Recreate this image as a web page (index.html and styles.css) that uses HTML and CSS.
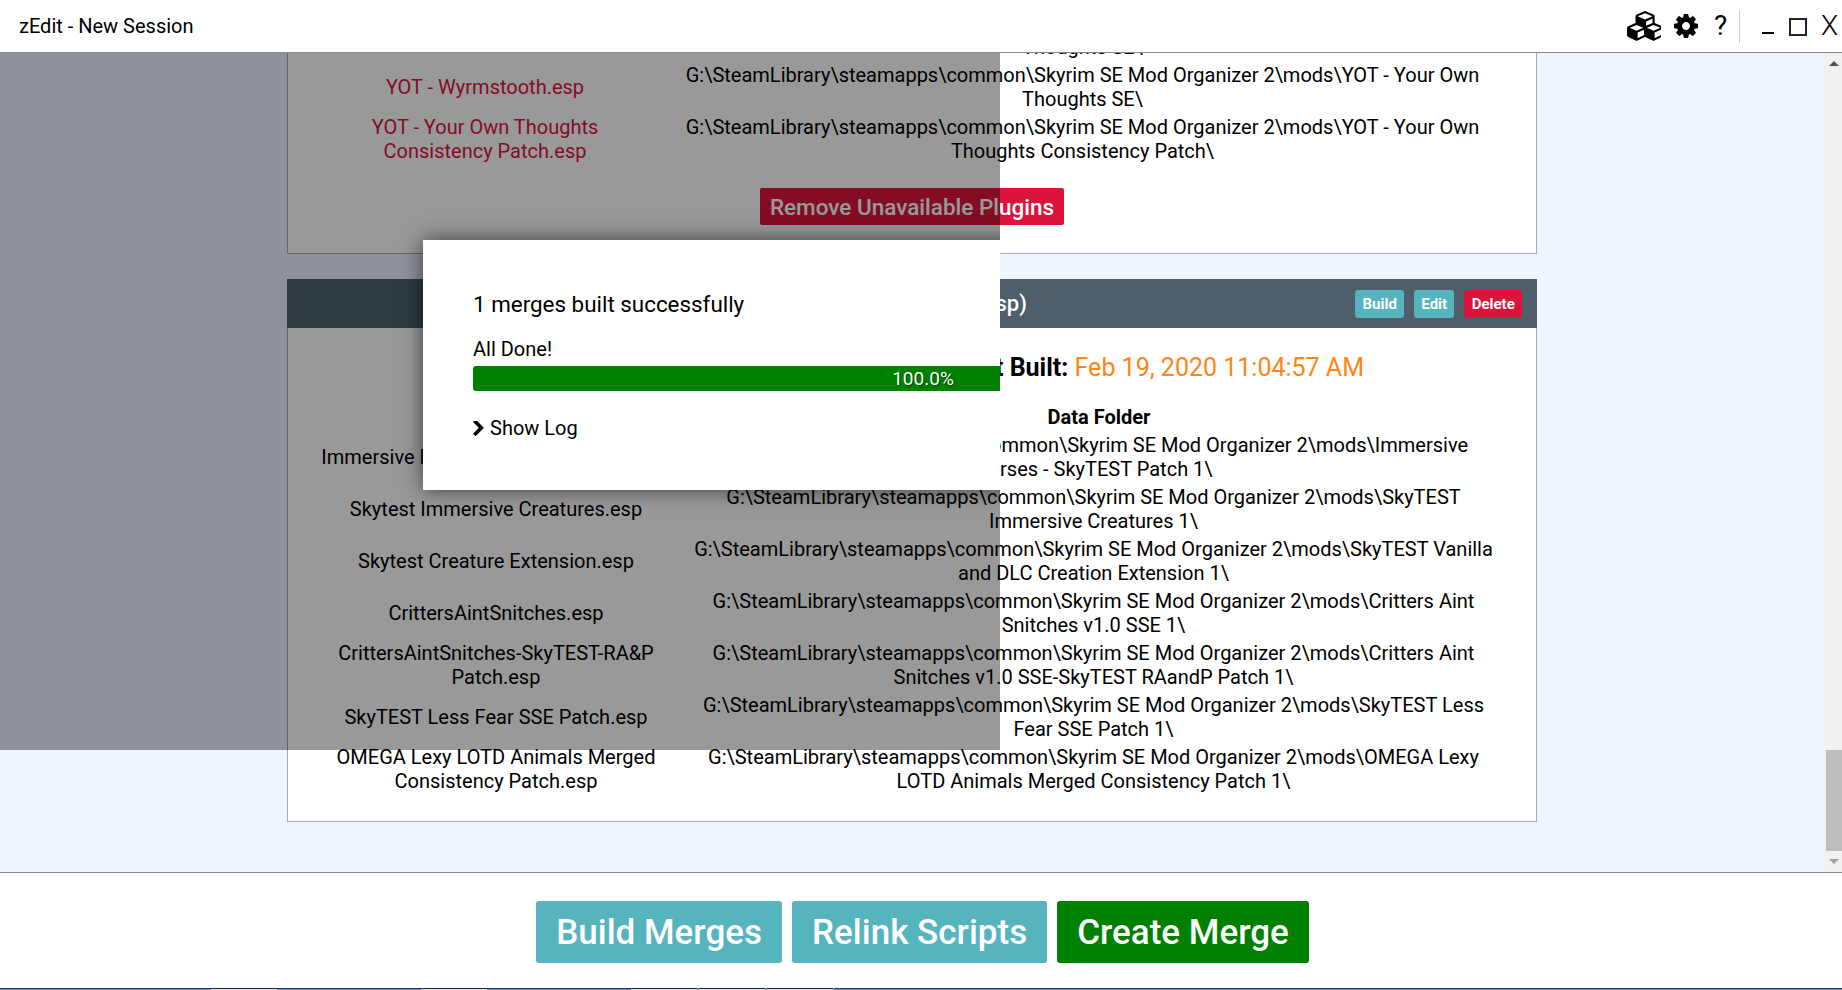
FILE: index.html
```html
<!DOCTYPE html>
<html lang="en">
<head>
<meta charset="utf-8">
<title>zEdit - New Session</title>
<link rel="stylesheet" href="styles.css">
</head>
<body>
<div class="app">
  <header class="titlebar">
    <div class="title">zEdit - New Session</div>
    <div class="win-tools">
      <svg class="ico-cubes" viewBox="0 0 2048 1792" aria-hidden="true"><path d="M640 1632l384-192v-314l-384 164v342zm-64-454l404-173-404-173-404 173zm1088 454l384-192v-314l-384 164v342zm-64-454l404-173-404-173-404 173zm-448-293l384-165v-266l-384 164v267zm-64-381l441-189-441-189-441 189zm1088 518v416q0 36-19 67t-52 47l-448 224q-25 14-57 14t-57-14l-448-224q-4-2-7-4-2 2-7 4l-448 224q-25 14-57 14t-57-14l-448-224q-33-16-52-47t-19-67v-416q0-38 21.5-70t56.5-48l434-186v-400q0-38 21.5-70t56.5-48l448-192q23-10 50-10t50 10l448 192q35 16 56.5 48t21.5 70v400l434 186q36 16 57 48t21 70z"/></svg>
      <svg class="ico-cog" viewBox="128 128 1536 1536" aria-hidden="true"><path d="M1152 896q0-106-75-181t-181-75-181 75-75 181 75 181 181 75 181-75 75-181zm512-109v222q0 12-8 23t-20 13l-185 28q-19 54-39 91 35 50 107 138 10 12 10 25t-9 23q-27 37-99 108t-94 71q-12 0-26-9l-138-108q-44 23-91 38-16 136-29 186-7 28-36 28h-222q-14 0-24.5-8.5t-11.5-21.5l-28-184q-49-16-90-37l-141 107q-10 9-25 9-14 0-25-11-126-114-165-168-7-10-7-23 0-12 8-23 15-21 51-66.5t54-70.5q-27-50-41-99l-183-27q-13-2-21-12.5t-8-23.5v-222q0-12 8-23t19-13l186-28q14-46 39-92-40-57-107-138-10-12-10-24 0-10 9-23 26-36 98.5-107.5t94.5-71.5q13 0 26 10l138 107q44-23 91-38 16-136 29-186 7-28 36-28h222q14 0 24.5 8.5t11.5 21.5l28 184q49 16 90 37l142-107q9-9 24-9 13 0 25 10 129 119 165 170 7 8 7 22 0 12-8 23-15 21-51 66.5t-54 70.5q26 50 41 98l183 28q13 2 21 12.5t8 23.5z"/></svg>
      <span class="help">?</span>
      <span class="divider"></span>
      <span class="win-min"></span>
      <span class="win-max"></span>
      <span class="win-close">X</span>
    </div>
  </header>

  <main class="main">
    <div class="scroll">
      <section class="card card-top">
        <div class="rows rows-top">
          <div class="cell"></div>
          <div class="cell">G:\SteamLibrary\steamapps\common\Skyrim SE Mod Organizer 2\mods\YOT - Your Own Thoughts SE\</div>
          <div class="cell missing">YOT - Wyrmstooth.esp</div>
          <div class="cell">G:\SteamLibrary\steamapps\common\Skyrim SE Mod Organizer 2\mods\YOT - Your Own Thoughts SE\</div>
          <div class="cell missing">YOT - Your Own Thoughts Consistency Patch.esp</div>
          <div class="cell">G:\SteamLibrary\steamapps\common\Skyrim SE Mod Organizer 2\mods\YOT - Your Own Thoughts Consistency Patch\</div>
        </div>
        <div class="remove-row"><button class="btn-remove">Remove Unavailable Plugins</button></div>
      </section>

      <section class="card-wrap">
        <div class="card-head">
          <span></span>
          <span class="card-title">Merged (Merged.esp)</span>
          <div class="head-btns">
            <button class="btn-sm teal">Build</button>
            <button class="btn-sm teal">Edit</button>
            <button class="btn-sm red">Delete</button>
          </div>
        </div>
        <div class="card card-body">
          <div class="built"><b>Last Built:</b> <span class="date">Feb 19, 2020 11:04:57 AM</span></div>
          <div class="rows rows-main">
            <div class="cell th"></div>
            <div class="cell th th-data">Data Folder</div>
            <div class="cell">Immersive Horses - SkyTEST Patch.esp</div>
            <div class="cell">G:\SteamLibrary\steamapps\common\Skyrim SE Mod Organizer 2\mods\Immersive Horses - SkyTEST Patch 1\</div>
            <div class="cell">Skytest Immersive Creatures.esp</div>
            <div class="cell">G:\SteamLibrary\steamapps\common\Skyrim SE Mod Organizer 2\mods\SkyTEST Immersive Creatures 1\</div>
            <div class="cell">Skytest Creature Extension.esp</div>
            <div class="cell">G:\SteamLibrary\steamapps\common\Skyrim SE Mod Organizer 2\mods\SkyTEST Vanilla and DLC Creation Extension 1\</div>
            <div class="cell">CrittersAintSnitches.esp</div>
            <div class="cell">G:\SteamLibrary\steamapps\common\Skyrim SE Mod Organizer 2\mods\Critters Aint Snitches v1.0 SSE 1\</div>
            <div class="cell">CrittersAintSnitches-SkyTEST-RA&amp;P Patch.esp</div>
            <div class="cell">G:\SteamLibrary\steamapps\common\Skyrim SE Mod Organizer 2\mods\Critters Aint Snitches v1.0 SSE-SkyTEST RAandP Patch 1\</div>
            <div class="cell">SkyTEST Less Fear SSE Patch.esp</div>
            <div class="cell">G:\SteamLibrary\steamapps\common\Skyrim SE Mod Organizer 2\mods\SkyTEST Less Fear SSE Patch 1\</div>
            <div class="cell">OMEGA Lexy LOTD Animals Merged Consistency Patch.esp</div>
            <div class="cell">G:\SteamLibrary\steamapps\common\Skyrim SE Mod Organizer 2\mods\OMEGA Lexy LOTD Animals Merged Consistency Patch 1\</div>
          </div>
        </div>
      </section>
    </div>
    <div class="scrollbar">
      <span class="arrow-up"></span>
      <span class="track"><span class="thumb"></span></span>
      <span class="arrow-down"></span>
    </div>
  </main>

  <footer class="actions">
    <button class="btn-lg teal">Build Merges</button>
    <button class="btn-lg teal">Relink Scripts</button>
    <button class="btn-lg green">Create Merge</button>
  </footer>

  <div class="taskbar">
    <span class="tb tb-a"></span><span class="tb tb-w"></span>
    <span class="tb tb-b"></span><span class="tb tb-w"></span>
    <span class="tb tb-b"></span><span class="tb tb-w"></span>
    <span class="tb tb-w tb-n"></span>
    <span class="tb tb-w tb-n"></span>
    <span class="tb tb-c"></span>
  </div>

  <div class="overlay">
    <div class="modal">
      <div class="modal-msg">1 merges built successfully</div>
      <div class="modal-status">All Done!</div>
      <div class="progress">100.0%</div>
      <div class="show-log">
        <svg class="ico-chev" viewBox="346 154 1036 1484" aria-hidden="true"><path d="M1363 877l-742 742q-19 19-45 19t-45-19l-166-166q-19-19-19-45t19-45l531-531-531-531q-19-19-19-45t19-45l166-166q19-19 45-19t45 19l742 742q19 19 19 45t-19 45z"/></svg>
        Show Log
      </div>
    </div>
  </div>
</div>
</body>
</html>
```

FILE: styles.css
```css
* { box-sizing: border-box; }
html, body { margin: 0; height: 100%; overflow: hidden; }
body { font-family: Roboto, "Liberation Sans", sans-serif; font-size: 20px; color: #000; background: #fff; }
button { font-family: inherit; border: 0; color: #fff; padding: 0; }

.app { position: relative; height: 990px; display: flex; flex-direction: column; }

.titlebar { height: 53px; flex: none; display: flex; align-items: center; justify-content: space-between; border-bottom: 1px solid #888; padding: 0 5px 0 19px; background: #fff; }
.title { font-size: 20px; }
.win-tools { display: flex; align-items: center; }
.ico-cubes { width: 34px; height: 30px; margin-right: 13px; }
.ico-cog { width: 24px; height: 24px; margin-right: 16px; }
.help { font-size: 28px; width: 13px; line-height: 1; margin-right: 12px; }
.divider { width: 1px; height: 33px; background: #ccc; margin-right: 22px; }
.win-min { width: 12px; height: 2px; background: #000; margin: 14px 15px 0 0; }
.win-max { width: 18px; height: 18px; border: 2px solid #223; margin: 2px 14px 0 0; }
.win-close { font-size: 28px; font-weight: 300; line-height: 1; width: 16px; text-align: center; }

.main { flex: 1; min-height: 0; display: flex; background: #eff6ff; border-bottom: 1px solid #888; overflow: hidden; }
.scroll { flex: 1; min-width: 0; padding: 0 287px; overflow: hidden; }

.card { background: #fff; border: 1px solid #aaa; }
.card-top { margin-top: -43px; padding-bottom: 28px; }
.rows { display: grid; row-gap: 4px; line-height: 24px; }
.rows-top { grid-template-columns: 300px 805px; column-gap: 45px; padding-left: 47px; }
.cell { display: flex; align-items: center; justify-content: center; text-align: center; min-height: 24px; }
.missing { color: #dc143c; }
.remove-row { display: flex; justify-content: center; margin-top: 25px; }
.btn-remove { width: 304px; height: 37px; background: #dc143c; border-radius: 2px; font-size: 22.5px; font-weight: 500; }

.card-wrap { margin-top: 25px; }
.card-head { height: 49px; background: #4e5f6b; color: #fff; display: grid; grid-template-columns: 1fr auto 1fr; align-items: center; padding: 0 15px; }
.card-title { font-size: 22px; font-weight: 500; padding-left: 17px; }
.head-btns { justify-self: end; display: flex; gap: 10px; }
.btn-sm { height: 28px; padding: 0 7.25px; border-radius: 3px; font-size: 15px; font-weight: 700; }
.teal { background: #56b4bf; }
.red { background: #dc143c; }
.green { background: green; }

.card-body { border-top: 0; padding: 26px 0 28px; }
.built { text-align: right; padding-right: 172px; font-size: 25px; line-height: 28px; }
.built b { font-weight: 700; }
.date { color: #ff8514; }
.rows-main { grid-template-columns: 352px 805px; column-gap: 19px; padding-left: 32px; margin-top: 23px; }
.th { font-weight: 700; }
.th-data { padding-left: 11px; }

.scrollbar { width: 18px; flex: none; background: #f1f1f1; display: flex; flex-direction: column; align-items: flex-end; }
.arrow-up { width: 0; height: 0; margin: 8px 3px 4px 0; border: solid transparent; border-width: 0 5px 5px; border-bottom-color: #505050; }
.track { flex: 1; width: 16px; display: flex; flex-direction: column; justify-content: flex-end; }
.thumb { height: 101px; background: #bdbdbd; }
.arrow-down { width: 0; height: 0; margin: 8px 3px 8px 0; border: solid transparent; border-width: 5px 5px 0; border-top-color: #a3a3a3; }

.actions { flex: none; height: 115px; display: flex; justify-content: center; align-items: center; gap: 10px; padding: 2px 0 0 3px; background: #fff; }
.btn-lg { height: 62px; padding: 2px 20px 0; border-radius: 3px; font-size: 35px; font-weight: 500; }

.taskbar { height: 2px; flex: none; display: flex; background: #6d8fbf; }
.tb { display: block; height: 2px; }
.tb-a { width: 211px; background: linear-gradient(#1d3a5c 50%, #6d8fbf 50%); }
.tb-b { width: 144px; background: linear-gradient(#1d3a5c 50%, #6d8fbf 50%); }
.tb-w { width: 66px; background: linear-gradient(#14263c 50%, #e6edf5 50%); }
.tb-n { margin-left: 2px; }
.tb-c { flex: 1; margin-left: 2px; background: linear-gradient(#1d3a5c 50%, #6d8fbf 50%); }

.overlay { position: absolute; left: 0; top: 53px; width: 1000px; height: 697px; background: rgba(0, 0, 0, .4); overflow: hidden; }
.modal { position: absolute; left: 423px; top: 187px; width: 1000px; height: 250px; background: #fff; padding: 47px 50px 0; box-shadow: 0 0 20px rgba(0, 0, 0, .6); }
.modal-msg { font-size: 22.4px; line-height: 34px; }
.modal-status { margin-top: 17px; line-height: 22px; }
.progress { width: 900px; height: 25px; margin-top: 6px; background: green; border-radius: 3px; color: #fff; font-size: 19px; text-align: center; line-height: 25px; text-shadow: 1px 1px 1px rgba(0, 0, 0, .5); }
.show-log { display: flex; align-items: center; gap: 6px; margin-top: 25px; line-height: 24px; }
.ico-chev { width: 11px; height: 15px; }
```
